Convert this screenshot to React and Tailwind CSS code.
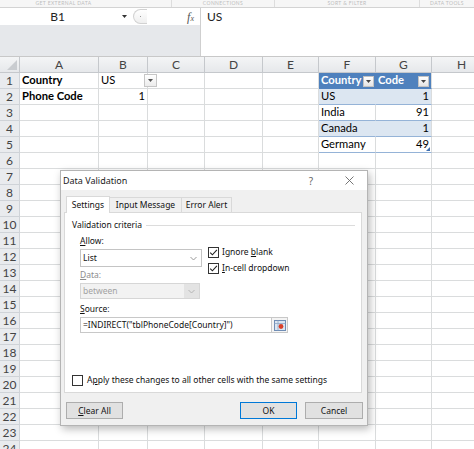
import React from 'react';

const COLS = [
  { l: 'A', w: 79 }, { l: 'B', w: 49 }, { l: 'C', w: 57 }, { l: 'D', w: 58 },
  { l: 'E', w: 56 }, { l: 'F', w: 57 }, { l: 'G', w: 56 }, { l: 'H', w: 60 },
];

function Arrow({ color = '#333' }) {
  return (
    <svg width="5" height="3" viewBox="0 0 5 3"><path d="M0 0h5L2.5 3z" fill={color} /></svg>
  );
}

function DropBtn() {
  return (
    <div className="flex h-[11px] w-[11px] items-center justify-center border border-[#c3c3c3] bg-gradient-to-b from-white to-[#e4e4e4]">
      <Arrow color="#444" />
    </div>
  );
}

function Check({ checked }) {
  return (
    <div className="flex h-[11px] w-[11px] shrink-0 items-center justify-center border border-[#333] bg-white">
      {checked && (
        <svg width="9" height="9" viewBox="0 0 9 9"><path d="M1.2 4.6 L3.4 6.8 L7.9 1.8" fill="none" stroke="#222" strokeWidth="1.1" /></svg>
      )}
    </div>
  );
}

function Chevron({ color = '#8a8a8a' }) {
  return (
    <svg width="7" height="5" viewBox="0 0 7 5"><path d="M0.5 1 L3.5 4 L6.5 1" fill="none" stroke={color} strokeWidth="1" /></svg>
  );
}

const band = { 2: true, 4: true };
const tableRows = { 2: ['US', '1'], 3: ['India', '91'], 4: ['Canada', '1'], 5: ['Germany', '49'] };

function Cell({ r, ci }) {
  const base = 'relative flex h-4 items-center whitespace-nowrap border-b border-r px-[2px]';
  let cls = 'border-[#dadcdd] bg-white';
  let content = null;
  if (ci === 0 && r === 1) content = <span className="font-bold">Country</span>;
  if (ci === 0 && r === 2) content = <span className="font-bold">Phone Code</span>;
  if (ci === 1 && r === 1) {
    content = (
      <>
        <span>US</span>
        <div className="absolute left-[45px] top-[1px] z-10 flex h-[13px] w-[13px] items-center justify-center border border-[#c6c6c6] bg-gradient-to-b from-white to-[#ececec]">
          <Arrow color="#555" />
        </div>
      </>
    );
  }
  if (ci === 1 && r === 2) {
    cls += ' justify-end';
    content = <span>1</span>;
  }
  if ((ci === 5 || ci === 6) && r === 1) {
    cls = ci === 5 ? 'border-b-[#4f81bd] border-r-[#4f81bd] bg-[#4f81bd] text-white' : 'border-b-[#4f81bd] border-r-[#dadcdd] bg-[#4f81bd] text-white';
    content = (
      <>
        <span className="font-bold">{ci === 5 ? 'Country' : 'Code'}</span>
        <div className={`absolute top-[3px] ${ci === 5 ? 'right-[1px]' : 'right-[2px]'}`}><DropBtn /></div>
      </>
    );
  }
  if ((ci === 5 || ci === 6) && tableRows[r]) {
    const b = band[r];
    cls = `${b ? 'bg-[#dce6f1]' : 'bg-white'} border-b-[#95b3d7] ${ci === 5 && b ? 'border-r-[#dce6f1]' : 'border-r-[#dadcdd]'}`;
    if (ci === 6) cls += ' justify-end';
    content = (
      <>
        <span>{tableRows[r][ci - 5]}</span>
        {ci === 6 && r === 5 && (
          <svg className="absolute bottom-[1px] right-[1px]" width="4" height="4" viewBox="0 0 4 4"><path d="M4 0V4H0z" fill="#3f6fb0" /></svg>
        )}
      </>
    );
  }
  return <div className={`${base} ${cls}`}>{content}</div>;
}

export default function App() {
  const rows = Array.from({ length: 24 }, (_, i) => i + 1);
  return (
    <div className="relative h-[449px] w-[474px] overflow-hidden bg-white font-['Lato',sans-serif] text-[11.2px] text-black">
      {/* ribbon group labels */}
      <div className="flex h-[8px] overflow-hidden border-b border-[#d3d3d3] bg-[#f6f6f6] text-[5px] leading-[7px] tracking-[0.4px] text-[#bdbdbd]">
        <div className="flex w-[172px] justify-center border-r border-[#dddddd] pr-[44px]"><span>GET EXTERNAL DATA</span></div>
        <div className="flex w-[103px] justify-center border-r border-[#dddddd]"><span>CONNECTIONS</span></div>
        <div className="flex w-[145px] justify-center border-r border-[#dddddd]"><span>SORT &amp; FILTER</span></div>
        <div className="flex flex-1 justify-center"><span>DATA TOOLS</span></div>
      </div>

      {/* formula bar */}
      <div className="flex h-[49px] border-b border-[#c8c8c8]">
        <div className="flex w-[200px] flex-col bg-[#e6e8eb]">
          <div className="flex h-[17px] items-center bg-white">
            <div className="relative flex h-full w-[133px] items-center justify-center text-[12px] text-[#222]">
              <span className="-ml-[18px]">B1</span>
              <div className="absolute right-[6px] top-[7px]"><Arrow color="#333" /></div>
            </div>
            <div className="flex h-[15px] w-[14px] items-center justify-center rounded-l-full border-y border-l border-[#d2d2d2] bg-gradient-to-b from-white to-[#efefef]">
              <div className="h-[1px] w-[1px] bg-[#9a9a9a]" />
            </div>
            <div className="flex-1" />
            <span className="mr-[6px] font-['Liberation_Serif',serif] text-[12px] italic text-[#555]">f<span className="text-[8px]">x</span></span>
          </div>
        </div>
        <div className="flex-1 border-l border-[#cfcfcf] bg-white pl-[6px] pt-[1px] text-[12px] leading-[16px] text-[#222]">US</div>
      </div>

      {/* sheet grid */}
      <div className="grid grid-cols-[20px_79px_49px_57px_58px_56px_57px_56px_60px]">
        <div className="relative h-4 border-b border-r border-[#c5c8cc] bg-gradient-to-b from-[#f4f5f6] to-[#e6e8eb]">
          <svg className="absolute bottom-[2px] right-[2px]" width="10" height="10" viewBox="0 0 10 10"><path d="M10 0V10H0z" fill="#c9ccd0" /></svg>
        </div>
        {COLS.map((c) => (
          <div key={c.l} className="flex h-4 items-center justify-center border-b border-r border-[#c5c8cc] bg-gradient-to-b from-[#f4f5f6] to-[#e6e8eb] text-[12px] text-[#444]">
            {c.l}
          </div>
        ))}
        {rows.map((r) => (
          <React.Fragment key={r}>
            <div className="flex h-4 items-center justify-center border-b border-r border-[#cfd3d8] bg-[#e9ebee] text-[12px] text-[#444]">{r}</div>
            {COLS.map((c, ci) => (
              <Cell key={c.l} r={r} ci={ci} />
            ))}
          </React.Fragment>
        ))}
      </div>

      {/* Data Validation dialog */}
      <div className="absolute left-[60px] top-[170px] flex h-[256px] w-[308px] flex-col border border-[#b4b4b4] bg-[#f0f0f0] font-['Noto_Sans',sans-serif] text-[8.5px] leading-[12px] text-[#111] shadow-[2px_3px_8px_rgba(0,0,0,0.28)]">
        <div className="flex h-[19px] shrink-0 items-center bg-white pl-[2px] text-[9px]">
          <span className="text-[#222]">Data Validation</span>
          <span className="ml-auto text-[10px] text-[#666]">?</span>
          <svg className="ml-[32px] mr-[13px]" width="9" height="9" viewBox="0 0 9 9"><path d="M0.5 0.5L8.5 8.5M8.5 0.5L0.5 8.5" stroke="#666" strokeWidth="0.9" /></svg>
        </div>
        <div className="flex flex-1 flex-col px-[3px] pt-[6px]">
          <div className="ml-[2px] flex h-[16px] items-end">
            <div className="relative z-10 -mb-px flex h-[17px] w-[44px] items-center justify-center border-x border-t border-[#d9d9d9] bg-white">Settings</div>
            <div className="flex h-[15px] w-[72px] items-center justify-center border-r border-t border-[#d9d9d9] bg-[#f0f0f0]">Input Message</div>
            <div className="flex h-[15px] w-[50px] items-center justify-center border-r border-t border-[#d9d9d9] bg-[#f0f0f0]">Error Alert</div>
          </div>
          <div className="flex h-[181px] w-[298px] flex-col border border-[#d9d9d9] bg-white pl-[7px]">
            <div className="mt-[6px] flex h-[12px] items-center">
              <span>Validation criteria</span>
              <div className="ml-[4px] mr-[6px] h-px flex-1 bg-[#dcdcdc]" />
            </div>
            <div className="ml-[8px] flex flex-col">
              <div className="flex">
                <div className="flex w-[122px] flex-col">
                  <div className="mt-[4px] h-[12px]"><span className="underline">A</span>llow:</div>
                  <div className="mt-[2px] flex h-[18px] items-center border border-[#c4c4c4] bg-white pl-[2px]">
                    <span className="flex-1">List</span>
                    <div className="flex h-full w-[16px] items-center justify-center"><Chevron color="#9a9a9a" /></div>
                  </div>
                  <div className="mt-[2px] h-[12px] text-[#8d8d8d]"><span className="underline">D</span>ata:</div>
                  <div className="mt-[2px] flex h-[16px] w-[120px] items-center border border-[#d6d6d6] bg-[#f2f2f2] pl-[2px] text-[#a2a2a2]">
                    <span className="flex-1">between</span>
                    <div className="flex h-full w-[15px] items-center justify-center bg-[#e3e3e3]"><Chevron color="#b4b4b4" /></div>
                  </div>
                </div>
                <div className="ml-[6px] mt-[14px] flex flex-col gap-[2px]">
                  <div className="flex h-[14px] items-center gap-[3px]"><Check checked /><span>Ignore <span className="underline">b</span>lank</span></div>
                  <div className="flex h-[14px] items-center gap-[3px]"><Check checked /><span><span className="underline">I</span>n-cell dropdown</span></div>
                </div>
              </div>
              <div className="mt-[4px] h-[12px]"><span className="underline">S</span>ource:</div>
              <div className="mt-[2px] flex">
                <div className="flex h-[16px] w-[192px] items-center border border-[#c8c8c8] bg-white pl-[2px]">=INDIRECT("tblPhoneCode[Country]")</div>
                <div className="flex h-[16px] w-[16px] items-center justify-center border border-l-0 border-[#c8c8c8] bg-[#f4f4f4]">
                  <svg width="12" height="11" viewBox="0 0 12 11">
                    <rect x="0.5" y="0.5" width="11" height="10" fill="#dbe5f1" stroke="#6f8db5" />
                    <path d="M0.5 3.5H11.5M4 0.5V10.5" stroke="#8ea7c8" strokeWidth="0.8" />
                    <circle cx="7" cy="6.5" r="2.4" fill="#d9402a" />
                  </svg>
                </div>
              </div>
            </div>
            <div className="mb-[6px] mt-auto flex h-[12px] items-center gap-[4px]">
              <Check />
              <span>A<span className="underline">p</span>ply these changes to all other cells with the same settings</span>
            </div>
          </div>
          <div className="mt-[9px] flex h-[17px]">
            <div className="ml-[2px] flex w-[57px] items-center justify-center border border-[#adadad] bg-[#e1e1e1]"><span><span className="underline">C</span>lear All</span></div>
            <div className="ml-auto flex w-[57px] items-center justify-center border border-[#0078d7] bg-[#e1e1e1]">OK</div>
            <div className="ml-[8px] mr-[1px] flex w-[58px] items-center justify-center border border-[#adadad] bg-[#e1e1e1]">Cancel</div>
          </div>
        </div>
      </div>
    </div>
  );
}
